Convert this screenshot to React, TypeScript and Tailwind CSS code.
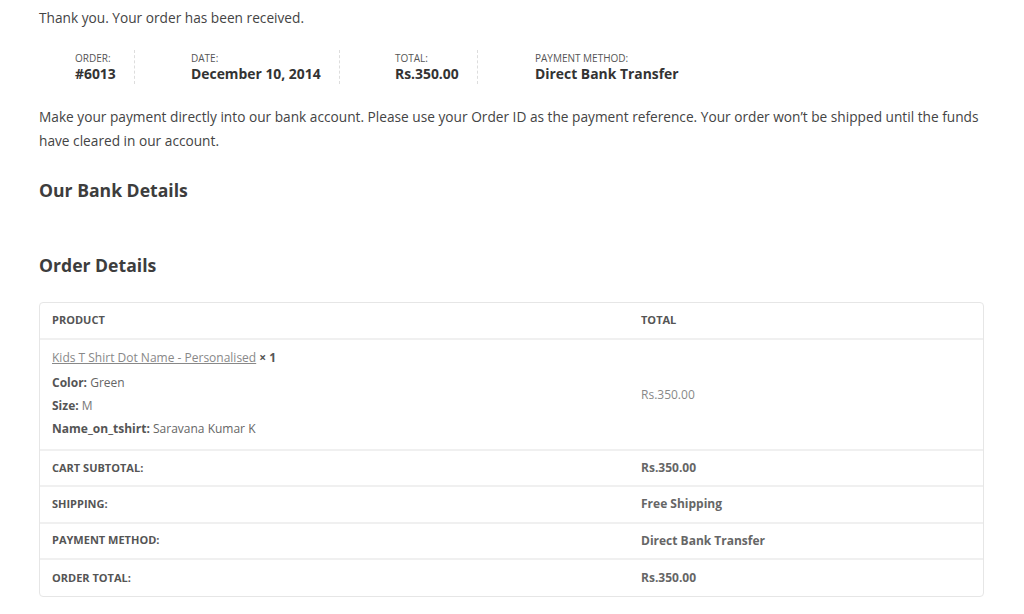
export default function App() {
  const totals = [
    { label: 'Cart Subtotal:', value: 'Rs.350.00' },
    { label: 'Shipping:', value: 'Free Shipping' },
    { label: 'Payment Method:', value: 'Direct Bank Transfer' },
    { label: 'Order Total:', value: 'Rs.350.00' },
  ];

  return (
    <div className="min-h-screen bg-white font-['Open_Sans',sans-serif] text-[#444]">
      <div className="w-[945px] ml-[39px]">
        <p className="pt-[8px] text-[13.7px] leading-[20px]">Thank you. Your order has been received.</p>

        <ul className="flex mt-[22px] ml-[36px]">
          <li className="w-[60px] border-r border-dashed border-[#ddd] mr-[56px] py-[1px]">
            <div className="text-[10px] leading-[14px] uppercase text-[#555]">Order:</div>
            <div className="text-[13.9px] leading-[18px] font-bold text-[#333]">#6013</div>
          </li>
          <li className="w-[149px] border-r border-dashed border-[#ddd] mr-[55px] py-[1px]">
            <div className="text-[10px] leading-[14px] uppercase text-[#555]">Date:</div>
            <div className="text-[13.9px] leading-[18px] font-bold text-[#333]">December 10, 2014</div>
          </li>
          <li className="w-[83px] border-r border-dashed border-[#ddd] mr-[57px] py-[1px]">
            <div className="text-[10px] leading-[14px] uppercase text-[#555]">Total:</div>
            <div className="text-[13.9px] leading-[18px] font-bold text-[#333]">Rs.350.00</div>
          </li>
          <li className="py-[1px]">
            <div className="text-[10px] leading-[14px] uppercase text-[#555]">Payment Method:</div>
            <div className="text-[13.9px] leading-[18px] font-bold text-[#333]">Direct Bank Transfer</div>
          </li>
        </ul>

        <p className="mt-[21px] text-[13.7px] leading-[23.5px]">
          Make your payment directly into our bank account. Please use your Order ID as the payment reference. Your order won’t be shipped until the funds have cleared in our account.
        </p>

        <h2 className="mt-[26px] text-[17.6px] leading-[24px] font-bold text-[#3d3d3d]">Our Bank Details</h2>

        <h2 className="mt-[51px] text-[17.6px] leading-[24px] font-bold text-[#3d3d3d]">Order Details</h2>

        <div className="mt-[25px] border border-[#e6e6e6] rounded-[4px] text-[12px] text-[#555]">
          <div className="flex h-[37px] items-center border-b-2 border-[#f0f0f0] text-[11px] font-bold uppercase">
            <div className="w-[589px] pl-[12px]">Product</div>
            <div className="pl-[12px]">Total</div>
          </div>
          <div className="flex h-[111px] border-b-2 border-[#f0f0f0]">
            <div className="w-[589px] pl-[12px] pt-[6px] leading-[23px]">
              <div className="mb-[2px]">
                <a href="#" className="underline text-[#888]">Kids T Shirt Dot Name - Personalised</a>{' '}
                <strong className="text-[#555]">× 1</strong>
              </div>
              <div><strong>Color:</strong> <span className="text-[#666]">Green</span></div>
              <div><strong>Size:</strong> <span className="text-[#777]">M</span></div>
              <div><strong>Name_on_tshirt:</strong> <span className="text-[#666]">Saravana Kumar K</span></div>
            </div>
            <div className="pl-[12px] flex items-center text-[#888]">Rs.350.00</div>
          </div>
          {totals.map((row, i) => (
            <div
              key={row.label}
              className={`flex h-[36.3px] items-center font-bold ${i < totals.length - 1 ? 'border-b-2 border-[#f0f0f0]' : ''}`}
            >
              <div className="w-[589px] pl-[12px] text-[11px] uppercase">{row.label}</div>
              <div className="pl-[12px] text-[#666]">{row.value}</div>
            </div>
          ))}
        </div>
      </div>
    </div>
  );
}
